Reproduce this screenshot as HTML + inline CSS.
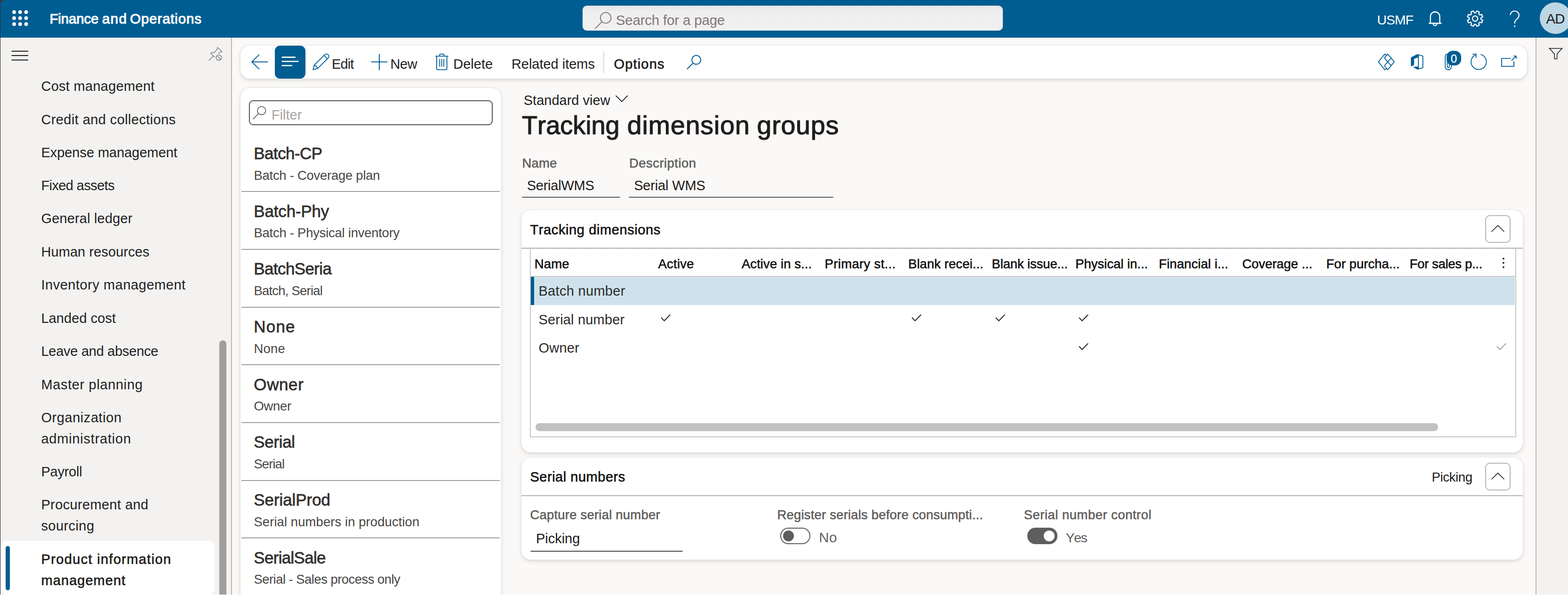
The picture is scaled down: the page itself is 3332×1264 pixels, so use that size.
<!DOCTYPE html>
<html lang="en">
<head>
<meta charset="utf-8">
<title>Tracking dimension groups - Finance and Operations</title>
<style>
*{box-sizing:border-box;margin:0;padding:0}
html,body{background:#faf9f8}
#app{position:relative;width:3332px;height:1264px;overflow:hidden;background:#faf9f8}
body{font-family:"Liberation Sans",sans-serif;font-kerning:none;-webkit-font-smoothing:antialiased}
.t{position:absolute;white-space:nowrap;display:block;margin:0;font-weight:400;font-style:normal;text-decoration:none}
.abs{position:absolute}
svg{position:absolute;overflow:visible}
#hdrbg{position:absolute;left:0;top:0;width:3332px;height:80px;background:#005D92}
#navbg{position:absolute;left:0;top:80px;width:493px;height:1184px;background:#f3f2f1;border-right:2px solid #b9b6b3}
#rpanebg{position:absolute;left:3263px;top:80px;width:69px;height:1184px;background:#f3f2f1;border-left:2px solid #b9b6b3}
#winedge{position:absolute;left:0;top:0;width:1px;height:1263px;background:#2c2c2e}
#toolbarbg{position:absolute;left:511px;top:97px;width:2734px;height:70px;background:#fff;border-radius:20px;box-shadow:0 3px 8px rgba(0,0,0,.14),0 0 2px rgba(0,0,0,.10)}
#listbg{position:absolute;left:511px;top:187px;width:554px;height:1100px;background:#fff;border-radius:20px;box-shadow:0 2px 8px rgba(0,0,0,.14),0 0 2px rgba(0,0,0,.10)}
.card{position:absolute;left:1108px;width:2128px;background:#fff;border-radius:20px;box-shadow:0 3px 8px rgba(0,0,0,.14),0 0 2px rgba(0,0,0,.10)}
.sep{position:absolute;left:513px;width:549px;height:2px;background:linear-gradient(#747372 0,#747372 1px,#cfcecd 1px,#cfcecd 2px)}
.cbtn{position:absolute;left:3156px;width:54px;height:59px;border:2px solid #b9b6b3;border-radius:10px;background:#fff}
</style>
</head>
<body>
<div id="app">

<header>
<div id="hdrbg"></div>
<svg width="80" height="80" style="left:0;top:0" fill="#fff"><circle cx="30" cy="25.75" r="3.9"/><circle cx="42.75" cy="25.75" r="3.9"/><circle cx="55.5" cy="25.75" r="3.9"/><circle cx="30" cy="38.5" r="3.9"/><circle cx="42.75" cy="38.5" r="3.9"/><circle cx="55.5" cy="38.5" r="3.9"/><circle cx="30" cy="51.25" r="3.9"/><circle cx="42.75" cy="51.25" r="3.9"/><circle cx="55.5" cy="51.25" r="3.9"/></svg>
<span class="t" style="left:107.90px;top:21px;font-size:29.5px;line-height:37px;color:#fff;height:37px;-webkit-text-stroke:1.1px #fff;"><span style="position:absolute;left:-2.42px;top:0;letter-spacing:-0.136px;white-space:pre">Finance </span><span style="position:absolute;left:109.15px;top:0;letter-spacing:1.418px;white-space:pre">and </span><span style="position:absolute;left:168.40px;top:0;letter-spacing:0.818px;white-space:pre">Operations</span></span>
<div class="abs" style="left:1238px;top:12px;width:893px;height:53px;border-radius:9px;background:linear-gradient(#e6e6e9 0,#efeff0 14px,#f0f0f1 100%)"></div>
<svg viewBox="0 0 2576 644" width="320.000" height="80.000" style="left:1230px;top:0px" fill="none" stroke="#7d7572" stroke-width="15"><circle cx="460" cy="305" r="91"/><path d="M396 371 L283 486" stroke-linecap="round"/></svg>
<span class="t" style="left:1308.71px;top:24px;font-size:29.5px;line-height:37px;color:#7f7775;letter-spacing:-0.185px;">Search for a page</span>
<span class="t" style="left:2926.35px;top:24px;font-size:28.5px;line-height:36px;color:#fff;letter-spacing:-1.084px;">USMF</span>
<svg viewBox="0 0 2576 966" width="160.000" height="60.000" style="left:3020px;top:10px" fill="none" stroke="#fff" stroke-width="38"><path d="M315 622 V405 A160 160 0 0 1 635 405 V622 M258 636 H697 M413 652 A62 62 0 0 0 537 652"/></svg>
<svg viewBox="0 0 2576 966" width="160.000" height="60.000" style="left:3020px;top:10px" fill="none" stroke="#fff" stroke-width="37" stroke-linejoin="round"><path d="M2106.08 535.51 L2072.40 616.82 L2002.06 598.82 L1968.82 632.06 L1986.82 702.40 L1905.51 736.08 L1868.51 673.61 L1821.49 673.61 L1784.49 736.08 L1703.18 702.40 L1721.18 632.06 L1687.94 598.82 L1617.60 616.82 L1583.92 535.51 L1646.39 498.51 L1646.39 451.49 L1583.92 414.49 L1617.60 333.18 L1687.94 351.18 L1721.18 317.94 L1703.18 247.60 L1784.49 213.92 L1821.49 276.39 L1868.51 276.39 L1905.51 213.92 L1986.82 247.60 L1968.82 317.94 L2002.06 351.18 L2072.40 333.18 L2106.08 414.49 L2043.61 451.49 L2043.61 498.51 Z"/><circle cx="1845" cy="475" r="90"/></svg>
<svg viewBox="0 0 1954 977" width="160.000" height="80.000" style="left:3172px;top:0px" fill="none" stroke="#fff" stroke-width="27"><path d="M455 388 C468 322 515 287 570 287 C635 287 682 335 682 398 C682 452 650 480 612 510 C582 535 570 556 570 612"/><rect x="553" y="662" width="34" height="34" fill="#fff" stroke="none"/></svg>
<div class="abs" style="left:3271.9px;top:4.9px;width:67.2px;height:67.2px;border-radius:50%;background:#bcd6e4"></div>
<span class="t" style="left:3285.54px;top:21px;font-size:29.5px;line-height:37px;color:#1f1a17;letter-spacing:-1.011px;">AD</span>
</header>
<nav aria-label="Modules">
<div id="navbg"></div>
<svg width="40" height="24" style="left:24px;top:106px" stroke="#1b1a19" stroke-width="2.2"><path d="M0.5 2.75 H36 M0.5 12 H36 M0.5 21.5 H36"/></svg>
<svg viewBox="0 0 2576 966" width="160.000" height="60.000" style="left:420px;top:90px" fill="none" stroke="#7a797e" stroke-width="24" stroke-linejoin="round"><path d="M382 618 L545 462 M442 372 L588 512 M442 372 C480 345 525 335 565 348 L660 252 L680 172 L835 322 L768 340 L700 378"/><circle cx="725" cy="520" r="93"/><path d="M660 455 L790 585"/></svg>
<div class="abs" style="left:2px;top:1149px;width:454px;height:114px;border-radius:12px;background:#fff"></div>
<div class="abs" style="left:12px;top:1160px;width:9px;height:94px;border-radius:5px;background:#005D92"></div>
<a class="t" style="left:87.42px;top:165px;font-size:29px;line-height:36px;color:#201f1e;letter-spacing:0.288px;">Cost management</a>
<a class="t" style="left:87.42px;top:236px;font-size:29px;line-height:36px;color:#201f1e;letter-spacing:0.408px;">Credit and collections</a>
<a class="t" style="left:87.42px;top:306px;font-size:29px;line-height:36px;color:#201f1e;letter-spacing:-0.041px;">Expense management</a>
<a class="t" style="left:87.42px;top:376px;font-size:29px;line-height:36px;color:#201f1e;letter-spacing:-0.587px;">Fixed assets</a>
<a class="t" style="left:87.42px;top:446px;font-size:29px;line-height:36px;color:#201f1e;letter-spacing:0.167px;">General ledger</a>
<a class="t" style="left:87.42px;top:517px;font-size:29px;line-height:36px;color:#201f1e;letter-spacing:0.086px;">Human resources</a>
<a class="t" style="left:87.42px;top:587px;font-size:29px;line-height:36px;color:#201f1e;letter-spacing:0.533px;">Inventory management</a>
<a class="t" style="left:87.42px;top:658px;font-size:29px;line-height:36px;color:#201f1e;letter-spacing:0.073px;">Landed cost</a>
<a class="t" style="left:87.42px;top:728px;font-size:29px;line-height:36px;color:#201f1e;letter-spacing:-0.255px;">Leave and absence</a>
<a class="t" style="left:87.42px;top:799px;font-size:29px;line-height:36px;color:#201f1e;letter-spacing:0.647px;">Master planning</a>
<a class="t" style="left:87.42px;top:869px;font-size:29px;line-height:36px;color:#201f1e;letter-spacing:0.567px;">Organization</a>
<a class="t" style="left:87.42px;top:914px;font-size:29px;line-height:36px;color:#201f1e;letter-spacing:0.780px;">administration</a>
<a class="t" style="left:87.42px;top:984px;font-size:29px;line-height:36px;color:#201f1e;letter-spacing:-0.237px;">Payroll</a>
<a class="t" style="left:87.42px;top:1054px;font-size:29px;line-height:36px;color:#201f1e;letter-spacing:0.371px;">Procurement and</a>
<a class="t" style="left:87.42px;top:1099px;font-size:29px;line-height:36px;color:#201f1e;letter-spacing:0.433px;">sourcing</a>
<span class="t" style="left:87.62px;top:1170px;font-size:29px;line-height:36px;color:#1b1a19;letter-spacing:1.334px;-webkit-text-stroke:0.64px #1b1a19;">Product information</span>
<span class="t" style="left:87.62px;top:1215px;font-size:29px;line-height:36px;color:#1b1a19;letter-spacing:1.036px;-webkit-text-stroke:0.64px #1b1a19;">management</span>
<div class="abs" style="left:466px;top:723px;width:15px;height:560px;border-radius:7.5px;background:#9f9e9d"></div>
</nav>
<aside>
<div id="rpanebg"></div>
<svg viewBox="0 0 2576 966" width="160.000" height="60.000" style="left:3172px;top:90px" fill="none" stroke="#1b1a19" stroke-width="24" stroke-linejoin="miter"><path d="M1940 205 H2375 L2200 397 V565 H2112 V397 Z"/></svg>
</aside>
<main>
<div role="toolbar">
<div id="toolbarbg"></div>
<svg viewBox="0 0 2576 966" width="160.000" height="60.000" style="left:420px;top:90px" fill="none" stroke="#045e96" stroke-width="31" stroke-linecap="round"><path d="M2392 668 H1858 M2098 428 L1855 668 L2098 908"/></svg>
<div class="abs" style="left:584px;top:97px;width:65px;height:70px;border-radius:11px;background:#005D92"></div>
<svg viewBox="0 0 2576 966" width="160.000" height="60.000" style="left:580px;top:95px" fill="none" stroke="#fff" stroke-width="42"><path d="M300 428 H770 M300 572 H878 M300 712 H662"/></svg>
<div class="abs" style="left:650px;top:109px;width:2px;height:46px;background:#e4e3e2"></div>
<svg viewBox="0 0 2576 966" width="160.000" height="60.000" style="left:580px;top:95px" fill="none" stroke="#045e96" stroke-width="29" stroke-linejoin="round"><path d="M1372 853 L1412 700 L1772 340 A80 80 0 0 1 1888 458 L1525 815 Z M1412 700 C1470 715 1510 760 1525 815 M1748 368 L1860 480"/></svg>
<span class="t" style="left:704.92px;top:118px;font-size:29px;line-height:36px;color:#201f1e;letter-spacing:-0.827px;">Edit</span>
<svg width="36" height="36" style="left:788px;top:114px" stroke="#045e96" stroke-width="2"><path d="M18 0.5 V34.8 M0.8 17.5 H35.2"/></svg>
<span class="t" style="left:829.42px;top:118px;font-size:29px;line-height:36px;color:#201f1e;letter-spacing:-0.403px;">New</span>
<svg viewBox="0 0 2576 966" width="160.000" height="60.000" style="left:900px;top:95px" fill="none" stroke="#045e96" stroke-linecap="butt"><path d="M400 392 H850 M550 392 V350 Q550 320 582 320 H668 Q700 320 700 350 V392 M450 392 V810 Q450 855 495 855 H755 Q800 855 800 810 V392" stroke-width="30"/><path d="M553 488 V752 M623 488 V752 M693 488 V752" stroke-width="29"/></svg>
<span class="t" style="left:963.17px;top:118px;font-size:29px;line-height:36px;color:#201f1e;letter-spacing:0.048px;">Delete</span>
<span class="t" style="left:1086.92px;top:118px;font-size:29px;line-height:36px;color:#201f1e;letter-spacing:-0.019px;">Related items</span>
<div class="abs" style="left:1281.5px;top:109px;width:2px;height:46px;background:#dddcdb"></div>
<span class="t" style="left:1304.43px;top:118px;font-size:29px;line-height:36px;color:#1b1a19;letter-spacing:1.188px;-webkit-text-stroke:0.64px #1b1a19;">Options</span>
<svg width="32" height="32" style="left:1459px;top:116px" fill="none" stroke="#045e96" stroke-width="2"><circle cx="20.6" cy="11.2" r="9.4"/><path d="M13.9 17.9 L1.5 30.3" stroke-linecap="round"/></svg>
<svg viewBox="0 0 2576 966" width="160.000" height="60.000" style="left:2920px;top:100px" fill="none" stroke="#045e96" stroke-width="29" stroke-linejoin="round" stroke-linecap="round"><path d="M408 278 L365 240 L147 505 L365 776 L408 740"/><path d="M465 240 L690 505 L465 776 L354 640 L465 505 L354 368 Z M465 505 L578 378 M465 505 L578 630"/></svg>
<svg viewBox="0 0 2576 966" width="160.000" height="60.000" style="left:2920px;top:100px" ><path fill="#045e96" d="M1475 240 L1272 345 Q1258 353 1258 370 L1258 648 Q1258 668 1276 659 L1352 618 Q1368 609 1368 590 L1368 420 Q1368 405 1382 400 L1500 355 L1500 663 L1352 678 Q1334 682 1348 692 L1478 770 L1530 756 L1530 252 Z"/><path fill="none" stroke="#045e96" stroke-width="30" stroke-linejoin="round" d="M1515 262 L1648 300 Q1668 306 1668 325 L1668 688 Q1668 706 1650 712 L1515 752"/></svg>
<svg viewBox="0 0 2576 966" width="160.000" height="60.000" style="left:3060px;top:100px" fill="none" stroke="#045e96" stroke-width="29"><path d="M262 238 Q180 240 180 312 L180 672 A105 105 0 0 0 390 672 L390 560 M250 520 L250 668 A35 35 0 0 0 320 668 L320 560"/></svg>
<div class="abs" style="left:3074.4px;top:108.1px;width:30.7px;height:30.7px;border-radius:13px;background:#005D92"></div>
<span class="t" style="left:3082.66px;top:109px;font-size:24px;line-height:31px;color:#fff;-webkit-text-stroke:0.3px #fff;">0</span>
<svg viewBox="0 0 2576 966" width="160.000" height="60.000" style="left:3060px;top:100px" fill="none" stroke="#045e96" stroke-width="29"><path d="M1392 252 A262 262 0 1 1 1222 264 M1110 240 H1232 V366"/></svg>
<svg viewBox="0 0 2576 966" width="160.000" height="60.000" style="left:3172px;top:90px" fill="none" stroke="#045e96" stroke-width="30"><path d="M612 550 H305 V820 H725 V650 M642 625 L798 472 M708 470 H802 V562"/></svg>
</div>
<section aria-label="Groups">
<div id="listbg"></div>
<div class="abs" style="left:529px;top:213px;width:518px;height:53px;border:2px solid #565452;border-radius:9px;background:#fff"></div>
<svg width="32" height="32" style="left:536px;top:224px" fill="none" stroke="#4a4846" stroke-width="1.5"><circle cx="19.8" cy="11" r="8.8"/><path d="M13.5 17.3 L2 28.8" stroke-linecap="round"/></svg>
<span class="t" style="left:576.92px;top:226px;font-size:29px;line-height:36px;color:#a6a4a2;letter-spacing:0.013px;">Filter</span>
<span class="t" style="left:539.33px;top:303px;font-size:35px;line-height:45px;color:#323130;letter-spacing:-0.573px;-webkit-text-stroke:0.77px #323130;">Batch-CP</span>
<span class="t" style="left:539.44px;top:355px;font-size:27.5px;line-height:35px;color:#484644;letter-spacing:-0.277px;">Batch - Coverage plan</span>
<div class="sep" style="top:406px"></div>
<span class="t" style="left:539.33px;top:426px;font-size:35px;line-height:45px;color:#323130;letter-spacing:-0.184px;-webkit-text-stroke:0.77px #323130;">Batch-Phy</span>
<span class="t" style="left:539.44px;top:477px;font-size:27.5px;line-height:35px;color:#484644;letter-spacing:-0.261px;">Batch - Physical inventory</span>
<div class="sep" style="top:529px"></div>
<span class="t" style="left:539.33px;top:548px;font-size:35px;line-height:45px;color:#323130;letter-spacing:-0.615px;-webkit-text-stroke:0.77px #323130;">BatchSeria</span>
<span class="t" style="left:539.44px;top:600px;font-size:27.5px;line-height:35px;color:#484644;letter-spacing:-0.793px;">Batch, Serial</span>
<div class="sep" style="top:652px"></div>
<span class="t" style="left:539.33px;top:671px;font-size:35px;line-height:45px;color:#323130;letter-spacing:1.185px;-webkit-text-stroke:0.77px #323130;">None</span>
<span class="t" style="left:539.44px;top:723px;font-size:27.5px;line-height:35px;color:#484644;letter-spacing:0.179px;">None</span>
<div class="sep" style="top:774px"></div>
<span class="t" style="left:539.33px;top:794px;font-size:35px;line-height:45px;color:#323130;letter-spacing:0.604px;-webkit-text-stroke:0.77px #323130;">Owner</span>
<span class="t" style="left:539.44px;top:845px;font-size:27.5px;line-height:35px;color:#484644;letter-spacing:-0.308px;">Owner</span>
<div class="sep" style="top:897px"></div>
<span class="t" style="left:539.33px;top:916px;font-size:35px;line-height:45px;color:#323130;letter-spacing:-0.344px;-webkit-text-stroke:0.77px #323130;">Serial</span>
<span class="t" style="left:539.44px;top:968px;font-size:27.5px;line-height:35px;color:#484644;letter-spacing:-0.932px;">Serial</span>
<div class="sep" style="top:1020px"></div>
<span class="t" style="left:539.33px;top:1039px;font-size:35px;line-height:45px;color:#323130;letter-spacing:-0.082px;-webkit-text-stroke:0.77px #323130;">SerialProd</span>
<span class="t" style="left:539.44px;top:1091px;font-size:27.5px;line-height:35px;color:#484644;letter-spacing:0.066px;">Serial numbers in production</span>
<div class="sep" style="top:1142px"></div>
<span class="t" style="left:539.33px;top:1162px;font-size:35px;line-height:45px;color:#323130;letter-spacing:-0.701px;-webkit-text-stroke:0.77px #323130;">SerialSale</span>
<span class="t" style="left:539.44px;top:1213px;font-size:27.5px;line-height:35px;color:#484644;letter-spacing:-0.546px;">Serial - Sales process only</span>
</section>
<section aria-label="Details">
<span class="t" style="left:1112.73px;top:195px;font-size:29px;line-height:36px;color:#201f1e;letter-spacing:0.010px;">Standard view</span>
<svg width="30" height="18" style="left:1307px;top:201px" fill="none" stroke="#1b1a19" stroke-width="1.8"><path d="M1.6 2.2 L14.2 14.8 L26.8 2.2"/></svg>
<h1 class="t" style="left:1110.40px;top:231px;font-size:55.5px;line-height:70px;color:#201f1e;height:70px;-webkit-text-stroke:1.22px #201f1e;"><span style="position:absolute;left:-1.22px;top:0;transform:scaleX(0.9760);transform-origin:0 0;white-space:pre">Tracking </span><span style="position:absolute;left:222.47px;top:0;letter-spacing:0.870px;white-space:pre">dimension </span><span style="position:absolute;left:498.07px;top:0;letter-spacing:0.808px;white-space:pre">groups</span></h1>
<label class="t" style="left:1109.54px;top:329px;font-size:27.5px;line-height:35px;color:#605e5c;letter-spacing:0.174px;-webkit-text-stroke:0.6px #605e5c;">Name</label>
<label class="t" style="left:1337.04px;top:329px;font-size:27.5px;line-height:35px;color:#605e5c;letter-spacing:0.439px;-webkit-text-stroke:0.6px #605e5c;">Description</label>
<span class="t" style="left:1119.68px;top:376px;font-size:29px;line-height:36px;color:#1b1a19;letter-spacing:-0.233px;">SerialWMS</span>
<span class="t" style="left:1347.18px;top:376px;font-size:29px;line-height:36px;color:#1b1a19;letter-spacing:-0.158px;">Serial WMS</span>
<div class="abs" style="left:1108.5px;top:379px;width:209px;height:41px;border-bottom:2px solid #5b5a58;border-radius:0 0 2px 2px"></div>
<div class="abs" style="left:1336px;top:379px;width:435px;height:41px;border-bottom:2px solid #5b5a58;border-radius:0 0 2px 2px"></div>
<section>
<div class="card" style="top:446px;height:515px"></div>
<h2 class="t" style="left:1126.55px;top:470px;font-size:29px;line-height:36px;color:#111;letter-spacing:0.598px;-webkit-text-stroke:0.64px #111;">Tracking dimensions</h2>
<div class="cbtn" style="top:457px"></div>
<svg width="30" height="16" style="left:3168px;top:478px" fill="none" stroke="#1b1a19" stroke-width="1.6"><path d="M1.6 14.2 L15 0.9 L28.4 14.2"/></svg>
<div class="abs" style="left:1108px;top:526px;width:2128px;height:3px;background:linear-gradient(#b9b7b5,#d2d0ce)"></div>
<div class="abs" style="left:1126px;top:529px;width:2096px;height:400px;border:2px solid #c8c8c8;border-top:none;background:#fff"></div>
<span class="t" style="left:1135.79px;top:543px;font-size:27.5px;line-height:35px;color:#111;letter-spacing:0.174px;-webkit-text-stroke:0.6px #111;">Name</span>
<span class="t" style="left:1398.40px;top:543px;font-size:27.5px;line-height:35px;color:#111;letter-spacing:0.278px;-webkit-text-stroke:0.6px #111;">Active</span>
<span class="t" style="left:1575.90px;top:543px;font-size:27.5px;line-height:35px;color:#111;letter-spacing:0.083px;-webkit-text-stroke:0.6px #111;">Active in s...</span>
<span class="t" style="left:1752.54px;top:543px;font-size:27.5px;line-height:35px;color:#111;letter-spacing:0.333px;-webkit-text-stroke:0.6px #111;">Primary st...</span>
<span class="t" style="left:1930.04px;top:543px;font-size:27.5px;line-height:35px;color:#111;letter-spacing:0.055px;-webkit-text-stroke:0.6px #111;">Blank recei...</span>
<span class="t" style="left:2107.54px;top:543px;font-size:27.5px;line-height:35px;color:#111;letter-spacing:-0.145px;-webkit-text-stroke:0.6px #111;">Blank issue...</span>
<span class="t" style="left:2285.24px;top:543px;font-size:27.5px;line-height:35px;color:#111;letter-spacing:-0.008px;-webkit-text-stroke:0.6px #111;">Physical in...</span>
<span class="t" style="left:2462.54px;top:543px;font-size:27.5px;line-height:35px;color:#111;letter-spacing:0.072px;-webkit-text-stroke:0.6px #111;">Financial i...</span>
<span class="t" style="left:2639.70px;top:543px;font-size:27.5px;line-height:35px;color:#111;letter-spacing:-0.063px;-webkit-text-stroke:0.6px #111;">Coverage ...</span>
<span class="t" style="left:2818.29px;top:543px;font-size:27.5px;line-height:35px;color:#111;letter-spacing:0.043px;-webkit-text-stroke:0.6px #111;">For purcha...</span>
<span class="t" style="left:2995.54px;top:543px;font-size:27.5px;line-height:35px;color:#111;letter-spacing:-0.329px;-webkit-text-stroke:0.6px #111;">For sales p...</span>
<svg width="8" height="24" style="left:3191px;top:547px" fill="#1b1a19"><circle cx="3.8" cy="2.4" r="1.9"/><circle cx="3.8" cy="11.4" r="1.9"/><circle cx="3.8" cy="20.6" r="1.9"/></svg>
<div class="abs" style="left:1128px;top:586px;width:2092px;height:2px;background:#cfcdcb"></div>
<div class="abs" style="left:1128px;top:588px;width:2091px;height:60px;background:#cfe2ec"></div>
<div class="abs" style="left:1128px;top:588px;width:7px;height:60px;background:#005D92"></div>
<span class="t" style="left:1144.42px;top:600px;font-size:29px;line-height:36px;color:#2b2a29;letter-spacing:0.315px;">Batch number</span>
<span class="t" style="left:1144.48px;top:661px;font-size:29px;line-height:36px;color:#2b2a29;letter-spacing:0.181px;">Serial number</span>
<span class="t" style="left:1144.43px;top:721px;font-size:29px;line-height:36px;color:#2b2a29;letter-spacing:0.273px;">Owner</span>
<svg width="24" height="18" style="left:1404.1px;top:667.45px" fill="none" stroke="#323130" stroke-width="2.2"><path d="M1.0 7.7 L7.5 14.5 L20.2 1.6"/></svg>
<svg width="24" height="18" style="left:1937.2px;top:667.45px" fill="none" stroke="#323130" stroke-width="2.2"><path d="M1.0 7.7 L7.5 14.5 L20.2 1.6"/></svg>
<svg width="24" height="18" style="left:2114.7px;top:667.45px" fill="none" stroke="#323130" stroke-width="2.2"><path d="M1.0 7.7 L7.5 14.5 L20.2 1.6"/></svg>
<svg width="24" height="18" style="left:2292.2px;top:667.45px" fill="none" stroke="#323130" stroke-width="2.2"><path d="M1.0 7.7 L7.5 14.5 L20.2 1.6"/></svg>
<svg width="24" height="18" style="left:2292.2px;top:727.95px" fill="none" stroke="#323130" stroke-width="2.2"><path d="M1.0 7.7 L7.5 14.5 L20.2 1.6"/></svg>
<svg width="24" height="18" style="left:3179.5px;top:727.95px" fill="none" stroke="#a8a6a4" stroke-width="2.2"><path d="M1.0 7.7 L7.5 14.5 L20.2 1.6"/></svg>
<div class="abs" style="left:1138px;top:899.3px;width:1917.5px;height:16.5px;border-radius:8.25px;background:#c1c1c1"></div>
</section>
<section>
<div class="card" style="top:972px;height:217px"></div>
<h2 class="t" style="left:1126.48px;top:995px;font-size:29px;line-height:36px;color:#111;letter-spacing:0.518px;-webkit-text-stroke:0.64px #111;">Serial numbers</h2>
<span class="t" style="left:3042.54px;top:996px;font-size:27.5px;line-height:35px;color:#1b1a19;letter-spacing:-0.370px;">Picking</span>
<div class="cbtn" style="top:983px"></div>
<svg width="30" height="16" style="left:3168px;top:1004px" fill="none" stroke="#1b1a19" stroke-width="1.6"><path d="M1.6 14.2 L15 0.9 L28.4 14.2"/></svg>
<div class="abs" style="left:1108px;top:1052px;width:2128px;height:2px;background:#b5b3b1"></div>
<label class="t" style="left:1126.40px;top:1076px;font-size:27.5px;line-height:35px;color:#605e5c;letter-spacing:0.209px;-webkit-text-stroke:0.6px #605e5c;">Capture serial number</label>
<span class="t" style="left:1138.92px;top:1126px;font-size:29px;line-height:36px;color:#1b1a19;letter-spacing:-0.015px;">Picking</span>
<div class="abs" style="left:1126.5px;top:1131px;width:324px;height:41px;border-bottom:2px solid #4a4948;border-radius:0 0 2px 2px"></div>
<label class="t" style="left:1651.54px;top:1076px;font-size:27.5px;line-height:35px;color:#605e5c;letter-spacing:0.183px;-webkit-text-stroke:0.6px #605e5c;">Register serials before consumpti...</label>
<div class="abs" style="left:1658px;top:1121.3px;width:64px;height:34.4px;border:2px solid #605e5c;border-radius:17.2px;background:#fff"></div>
<div class="abs" style="left:1663.6px;top:1127.2px;width:23px;height:23px;border-radius:50%;background:#605e5c"></div>
<span class="t" style="left:1740.13px;top:1123px;font-size:29.5px;line-height:37px;color:#605e5c;letter-spacing:0.598px;">No</span>
<label class="t" style="left:2175.80px;top:1076px;font-size:27.5px;line-height:35px;color:#605e5c;letter-spacing:0.468px;-webkit-text-stroke:0.6px #605e5c;">Serial number control</label>
<div class="abs" style="left:2183px;top:1121.3px;width:64px;height:34.4px;border-radius:17.2px;background:#605e5c"></div>
<div class="abs" style="left:2217.7px;top:1127.2px;width:23px;height:23px;border-radius:50%;background:#fff"></div>
<span class="t" style="left:2264.67px;top:1124px;font-size:28.5px;line-height:36px;color:#605e5c;letter-spacing:-1.4px;">Yes</span>
</section>
</section>
</main>
<div id="winedge"></div>
<div class="abs" style="left:0;top:0;width:9px;height:9px;background:radial-gradient(circle at 9px 9px,rgba(56,56,58,0) 7.6px,#38383a 8.4px)"></div>
<div class="abs" style="left:0;top:1263px;width:3332px;height:1px;background:#fff"></div>
</div>
</body>
</html>
